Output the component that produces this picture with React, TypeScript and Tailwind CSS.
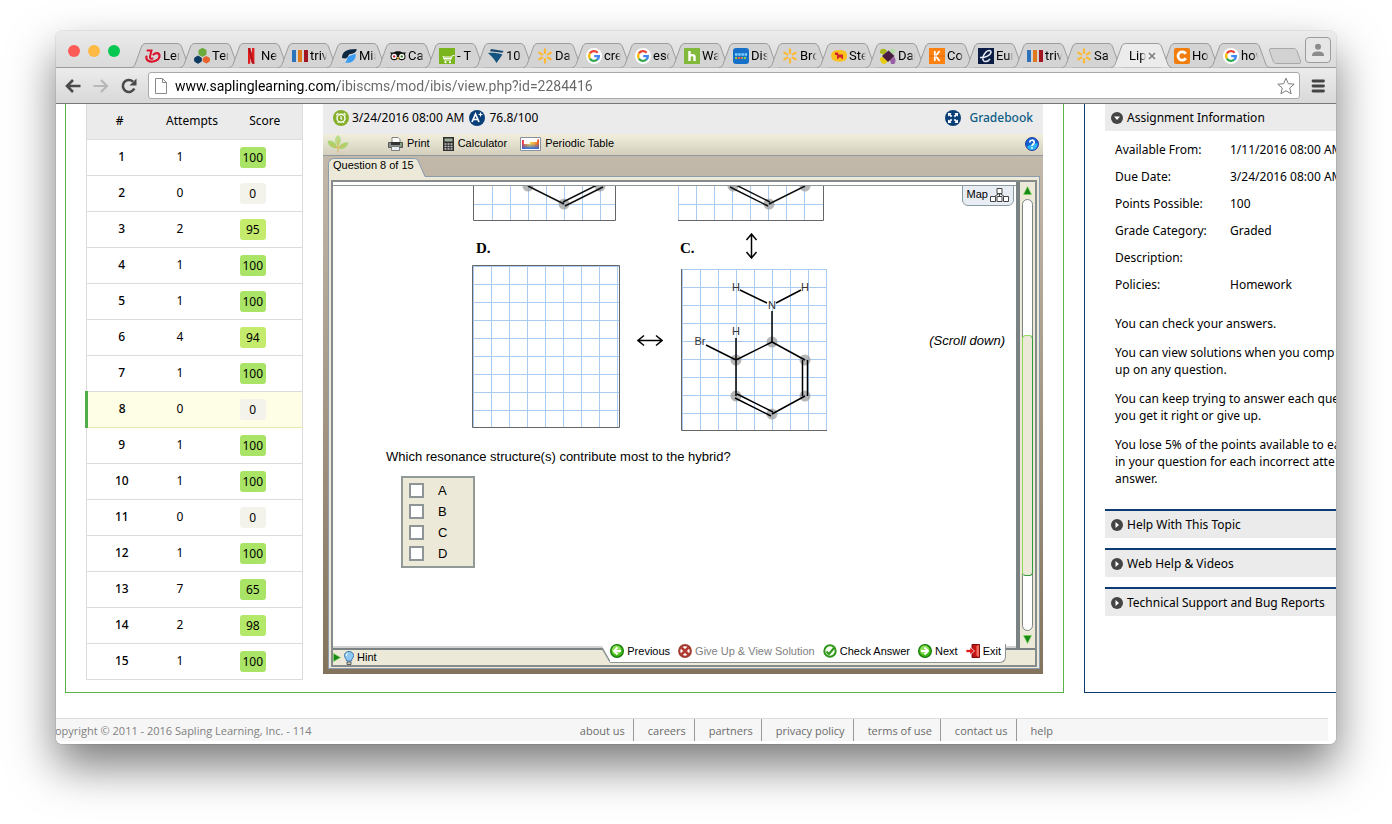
import type { ReactNode } from 'react'

const GoogleIcon = () => (
  <svg viewBox="0 0 16 16" className="h-4 w-4">
    <circle cx="8" cy="8" r="8" fill="#fff" />
    <g fill="none" strokeWidth="2.3">
      <path d="M3.9 5.4A4.9 4.9 0 0 1 11.6 4.7" stroke="#ea4335" />
      <path d="M3.9 10.6A4.9 4.9 0 0 1 3.9 5.4" stroke="#fbbc05" />
      <path d="M11.4 11.5A4.9 4.9 0 0 1 3.9 10.6" stroke="#34a853" />
      <path d="M8.2 8.1H12.9A4.9 4.9 0 0 1 11.2 11.7" stroke="#4285f4" />
    </g>
  </svg>
)

const SparkIcon = () => (
  <svg viewBox="0 0 16 16" className="h-4 w-4" stroke="#fdb933" strokeWidth="2.2" strokeLinecap="round">
    <path d="M8 1.4V5M8 11V14.6M2.3 4.7L5.3 6.4M10.7 9.6L13.7 11.3M2.3 11.3L5.3 9.6M10.7 6.4L13.7 4.7" />
  </svg>
)

const TrivagoIcon = () => (
  <svg viewBox="0 0 16 16" className="h-4 w-4">
    <path d="M0 2H4V14H0Z" fill="#2d73b9" />
    <path d="M6 2H10V14H6Z" fill="#e0791c" />
    <path d="M12 2H16V14H12Z" fill="#a31621" />
  </svg>
)

const icons: Record<string, ReactNode> = {
  lenovo: (
    <svg viewBox="0 0 16 16" className="h-4 w-4" fill="none" stroke="#d9142b" strokeLinecap="round">
      <path d="M2.500 2.500H6.500L5 8.500C4.500 10.500 6 11 7.500 10.500" strokeWidth="2" />
      <path d="M1.500 8.500C.5 12 4 14 8 13.500C12 13 14.800 10.500 14.500 7.500C14 4.500 10.500 4.500 8.500 6.500" strokeWidth="2.200" />
    </svg>
  ),
  terra: (
    <svg viewBox="0 0 16 16" className="h-4 w-4">
      <path d="M8.500 .3L12 2.200V6.400L8.500 8.400L5 6.400V2.200Z" fill="#6aaa3b" stroke="#6aaa3b" strokeLinejoin="round" />
      <path d="M4 8L7.300 9.900V13.300L4 15.300L.7 13.300V9.900Z" fill="#0b3a63" stroke="#0b3a63" strokeLinejoin="round" />
      <path d="M12.300 8.500L15.400 10.200V13.200L12.300 15L9.200 13.200V10.200Z" fill="#e8622b" stroke="#e8622b" strokeLinejoin="round" />
    </svg>
  ),
  netflix: (
    <svg viewBox="0 0 16 16" className="h-4 w-4">
      <path d="M5 0H7.200L9 6V0H11.400V16L9 15.600L7.300 10V15.600L5 16Z" fill="#e01e1e" />
      <path d="M5 0H7.200L11.400 15.800L9 15.600Z" fill="#b5121b" />
    </svg>
  ),
  trivago: <TrivagoIcon />,
  surf: (
    <svg viewBox="0 0 16 16" className="h-4 w-4">
      <path d="M1 10C1 4 5 1 15.500 1C16 3 14 5.500 9.500 6C6.500 6.500 8 9.500 4.500 10.500Z" fill="#0d2843" />
      <path d="M0 15.500C6 15.500 5.500 12 6.500 9.500C8 7 12 7.500 14.500 5.500C15.500 11 12 15.500 4 14.800Z" fill="#3b9cf4" />
    </svg>
  ),
  owl: (
    <svg viewBox="0 0 16 16" className="h-4 w-4">
      <path d="M0 4.500H3.500C6 2.700 10 2.700 12.500 4.500H16L14.500 6.500L9 11H7L1.500 6.500Z" fill="#111" />
      <circle cx="4.200" cy="8.400" r="3.200" fill="#fff" stroke="#111" strokeWidth="1.100" />
      <circle cx="11.800" cy="8.400" r="3.200" fill="#fff" stroke="#111" strokeWidth="1.100" />
      <circle cx="4.200" cy="8.400" r="1.200" fill="#c23" />
      <circle cx="11.800" cy="8.400" r="1.200" fill="#3a7d2c" />
      <path d="M6.800 9L8 12.500L9.200 9Z" fill="#e6a72b" />
    </svg>
  ),
  cart: (
    <svg viewBox="0 0 16 16" className="h-4 w-4">
      <path d="M0 0H16V16H0Z" fill="#7ab51d" />
      <path d="M4 8L5.500 12H11.500L13.500 7.500H15.500M4.500 9H12.500M5 10.500H12" stroke="#fff" fill="none" />
      <circle cx="6.500" cy="14.200" r="1.100" fill="#fff" />
      <circle cx="11" cy="14.200" r="1.100" fill="#fff" />
    </svg>
  ),
  eagle: (
    <svg viewBox="0 0 16 16" className="h-4 w-4">
      <path d="M3 1L15.500 3L14.500 4.800L2 3.300Z" fill="#17466e" />
      <path d="M0 5C5 4.500 10 5 14.500 6.500L8.500 15C7 11.500 3 8 0 5Z" fill="#14527f" />
    </svg>
  ),
  spark: <SparkIcon />,
  google: <GoogleIcon />,
  houzz: (
    <svg viewBox="0 0 16 16" className="h-4 w-4">
      <path d="M0 0H16V16H0Z" fill="#83b93b" />
      <path d="M5.500 3V13M5.500 8.500C6.500 6.800 10.500 6.500 10.500 9V13" stroke="#fff" strokeWidth="2.400" fill="none" />
    </svg>
  ),
  discover: (
    <svg viewBox="0 0 16 16" className="h-4 w-4">
      <rect width="16" height="16" rx="3" fill="#1670c8" />
      <path d="M2 6.500H14" stroke="#7fd0ff" strokeWidth="2.400" strokeDasharray="2.500 .7" />
      <path d="M2 10H14" stroke="#8fd14f" strokeWidth="2" strokeDasharray="2 1" />
      <path d="M4.500 10H9" stroke="#e0553d" strokeWidth="2" strokeDasharray="2 1" />
    </svg>
  ),
  steak: (
    <svg viewBox="0 0 16 16" className="h-4 w-4">
      <path d="M2 3.500C5 1.500 12 1.500 14.500 3.500C16.500 5.500 16.500 10 14.500 12C11 14.500 5 14 2 12C-.5 10 -.5 5.500 2 3.500Z" fill="#fbc21f" />
      <path d="M4 4.500H7L7.500 6.500H12V11H10.500V9.500H7.500V11H6V7H4Z" fill="#d2232a" />
    </svg>
  ),
  darden: (
    <svg viewBox="0 0 16 16" className="h-4 w-4">
      <path d="M0 3C1 0 5 0 7 3L4 7L0 5Z" fill="#a7b71c" />
      <path d="M9 3C11-.5 15 0 15.500 3L14 6.500L11 6Z" fill="#b5dba8" />
      <path d="M0 10L4 8L8 13L5 16C2 16 0 14 0 10Z" fill="#e6cc12" />
      <path d="M10 12L14 9C16 10 16 15 14 16H11Z" fill="#9b5fa8" />
      <path d="M8.500 2.500L14.500 8L8 14L2 8Z" fill="#4b1c42" />
    </svg>
  ),
  kayak: (
    <svg viewBox="0 0 16 16" className="h-4 w-4">
      <path d="M0 0H16V16H0Z" fill="#ff8211" />
      <path d="M5.800 3V13M10.500 3L6.800 8L10.500 13" stroke="#fff" strokeWidth="1.800" fill="none" />
      <path d="M0 8H16" stroke="#c9620a" strokeWidth=".7" />
    </svg>
  ),
  europe: (
    <svg viewBox="0 0 16 16" className="h-4 w-4">
      <path d="M0 0H16V16H0Z" fill="#0b1d44" />
      <path d="M2 9.500C7 10 13 7 13 4C13 1.800 9.500 2 7.500 4.500C4.500 8 3.500 13.500 7.500 13.500C9.500 13.500 11 12.500 12 11" stroke="#e8edf5" strokeWidth="1.500" fill="none" />
    </svg>
  ),
  choice: (
    <svg viewBox="0 0 16 16" className="h-4 w-4">
      <rect width="16" height="16" rx="2" fill="#f07d0c" />
      <path d="M11.800 5.800A4.200 4.200 0 1 0 11.800 10.200" stroke="#fff" strokeWidth="2.800" fill="none" />
    </svg>
  ),
}

const tabs = [
  { icon: 'lenovo', title: 'Len' },
  { icon: 'terra', title: 'Ter' },
  { icon: 'netflix', title: 'Ne' },
  { icon: 'trivago', title: 'triv' },
  { icon: 'surf', title: 'Mia' },
  { icon: 'owl', title: 'Ca' },
  { icon: 'cart', title: '- T' },
  { icon: 'eagle', title: '10' },
  { icon: 'spark', title: 'Da' },
  { icon: 'google', title: 'cre' },
  { icon: 'google', title: 'esc' },
  { icon: 'houzz', title: 'Wa' },
  { icon: 'discover', title: 'Dis' },
  { icon: 'spark', title: 'Bro' },
  { icon: 'steak', title: 'Ste' },
  { icon: 'darden', title: 'Dar' },
  { icon: 'kayak', title: 'Co' },
  { icon: 'europe', title: 'Eur' },
  { icon: 'trivago', title: 'triv' },
  { icon: 'spark', title: 'Sa' },
  { icon: '', title: 'Lip', active: true },
  { icon: 'choice', title: 'Ho' },
  { icon: 'google', title: 'how' },
]

const scores = [
  { attempts: 1, score: 100 },
  { attempts: 0, score: 0 },
  { attempts: 2, score: 95 },
  { attempts: 1, score: 100 },
  { attempts: 1, score: 100 },
  { attempts: 4, score: 94 },
  { attempts: 1, score: 100 },
  { attempts: 0, score: 0 },
  { attempts: 1, score: 100 },
  { attempts: 1, score: 100 },
  { attempts: 0, score: 0 },
  { attempts: 1, score: 100 },
  { attempts: 7, score: 65 },
  { attempts: 2, score: 98 },
  { attempts: 1, score: 100 },
]

const details = [
  ['Available From:', '1/11/2016 08:00 AM'],
  ['Due Date:', '3/24/2016 08:00 AM'],
  ['Points Possible:', '100'],
  ['Grade Category:', 'Graded'],
  ['Description:', ''],
  ['Policies:', 'Homework'],
]

const footerLinks = ['about us', 'careers', 'partners', 'privacy policy', 'terms of use', 'contact us', 'help']

const badgeColor = (score: number) => {
  if (score === 0) return 'bg-[#f3f3ec]'
  if (score === 95 || score === 94) return 'bg-[#c4eb6c]'
  if (score === 98) return 'bg-[#b4e868]'
  return 'bg-[#a9e467]'
}

function TabStrip() {
  return (
    <div className="flex h-[37px] items-end border-b border-[#9b9b9b] bg-linear-to-b from-[#ebebeb] to-[#dadada]">
      <div className="flex gap-2 self-center pt-1 pl-3">
        <span className="h-3 w-3 rounded-full bg-[#fc5b57]" />
        <span className="h-3 w-3 rounded-full bg-[#fdba45]" />
        <span className="h-3 w-3 rounded-full bg-[#05c853]" />
      </div>
      <div className="-mb-px ml-[11px] flex min-w-0">
        {tabs.map((t, i) => (
          <button
            key={i}
            className={
              t.active
                ? 'relative z-10 -mr-3 flex h-[25px] w-[61px] shrink-0 items-center pl-[18px]'
                : 'relative -mr-3 flex h-[25px] w-[61px] shrink-0 items-center pl-[14px]'
            }
          >
            <svg viewBox="0 0 61 25" className="absolute inset-0 h-[25px] w-[61px]">
              <path
                d="M0 24.500C3 24.500 4 22 5 19L10 5C11 2 12 .5 15 .5H46C49 .5 50 2 51 5L56 19C57 22 58 24.500 61 24.500"
                fill={t.active ? '#ececec' : '#d4d4d4'}
                stroke="#9d9d9d"
              />
            </svg>
            {!t.active && <span className="relative mr-[2px] h-4 w-4">{icons[t.icon]}</span>}
            <span className="relative w-[17px] overflow-hidden text-left text-[13px] leading-4 whitespace-nowrap mask-[linear-gradient(to_right,#000_70%,transparent)]">
              {t.title}
            </span>
            {t.active && (
              <svg viewBox="0 0 8 8" className="relative ml-0.5 h-2 w-2" stroke="#7b7b7b" strokeWidth="1.500">
                <path d="M1 1L7 7M7 1L1 7" />
              </svg>
            )}
          </button>
        ))}
      </div>
      <button aria-label="New tab" className="mb-0.5 ml-2.5">
        <svg viewBox="0 0 34 18" className="h-[18px] w-[34px]">
          <path d="M3 1.500H25C27 1.500 28 2 29 4L32.500 14C33 16 32.500 16.500 31 16.500H9C7 16.500 6 16 5 14L1.500 4C1 2 1.500 1.500 3 1.500Z" fill="#d2d2d2" stroke="#a8a8a8" />
        </svg>
      </button>
      <button aria-label="Profile" className="mr-[5px] mb-[4px] ml-auto flex h-[26px] w-[26px] items-center justify-center rounded-sm border border-[#9c9c9c] bg-[#e6e6e6]">
        <svg viewBox="0 0 14 14" className="h-3.5 w-3.5" fill="#8c8c8c">
          <circle cx="7" cy="3.800" r="3" />
          <path d="M1 13C1 9.500 3 8.500 7 8.500S13 9.500 13 13Z" />
        </svg>
      </button>
    </div>
  )
}

function AddressBar() {
  return (
    <div className="flex h-9 items-center border-b border-[#777] bg-linear-to-b from-[#ececec] to-[#d8d8d8] pr-[11px] pl-[9px]">
      <button aria-label="Back" className="mr-3">
        <svg viewBox="0 0 16 14" className="h-3.5 w-4" fill="none" stroke="#4a4a4a" strokeWidth="2.600">
          <path d="M15.500 7H2.500M8 1L2 7L8 13" />
        </svg>
      </button>
      <button aria-label="Forward" className="mr-3">
        <svg viewBox="0 0 16 14" className="h-3.5 w-4" fill="none" stroke="#b7b7b7" strokeWidth="2.200">
          <path d="M.5 7H13.500M8 1L14 7L8 13" />
        </svg>
      </button>
      <button aria-label="Reload" className="mr-[11px]">
        <svg viewBox="0 0 16 16" className="h-4 w-4">
          <path d="M13.300 10.500A6 6 0 1 1 12 3.600" fill="none" stroke="#4a4a4a" strokeWidth="2.600" />
          <path d="M15.500 .5V7.500H8.500Z" fill="#4a4a4a" />
        </svg>
      </button>
      <div className="flex h-[27px] flex-1 items-center rounded-[3px] border border-[#a9a9a9] bg-white pr-1 pl-1.5">
        <svg viewBox="0 0 12 16" className="h-4 w-3" fill="#fff" stroke="#8a8a8a">
          <path d="M.5 .5H7.500L11.500 4.500V15.500H.5ZM7.500 .5V4.500H11.500" />
        </svg>
        <input
          aria-label="Address"
          defaultValue="www.saplinglearning.com/ibiscms/mod/ibis/view.php?id=2284416"
          className="ml-2 min-w-0 flex-1 bg-[linear-gradient(90deg,#000_163px,#666_163px)] bg-clip-text text-sm text-transparent outline-none"
        />
        <button aria-label="Bookmark">
          <svg viewBox="0 0 18 18" className="h-[18px] w-[18px]" fill="#fff" stroke="#7d7d7d" strokeLinejoin="round">
            <path d="M9 1.200L11.300 6.700L17.200 7.200L12.700 11L14.100 16.800L9 13.700L3.900 16.800L5.300 11L.8 7.200L6.700 6.700Z" />
          </svg>
        </button>
      </div>
      <button aria-label="Menu" className="ml-[11px]">
        <svg viewBox="0 0 14 14" className="h-3.5 w-3.5" stroke="#444" strokeWidth="2.800" strokeLinecap="round">
          <path d="M2 2H12.500M2 7H12.500M2 12H12.500" />
        </svg>
      </button>
    </div>
  )
}

function ScoreTable() {
  return (
    <table className="w-[218px] shrink-0 table-fixed border-collapse self-start border border-t-0 border-[#dcdcdc] text-center text-xs text-black">
      <thead>
        <tr className="h-[35px] bg-[#ebebeb]">
          <th className="w-[70px] border-b border-[#dcdcdc] pr-1 font-medium">#</th>
          <th className="w-[71px] border-b border-[#dcdcdc] font-normal">Attempts</th>
          <th className="border-b border-[#dcdcdc] font-normal">Score</th>
        </tr>
      </thead>
      <tbody>
        {scores.map((s, i) => (
          <tr key={i} className={i === 7 ? 'h-9 border-y border-[#e8e6b0] bg-[#fefde6]' : 'h-9 border-b border-[#dcdcdc]'}>
            <td className={i === 7 ? 'border-l-3 border-l-[#4fae4a] font-medium' : 'font-medium'}>{i + 1}</td>
            <td className="pr-6">{s.attempts}</td>
            <td className="pr-6">
              <span className={`inline-block w-[26px] rounded-[3px] leading-[21px] ${badgeColor(s.score)}`}>{s.score}</span>
            </td>
          </tr>
        ))}
      </tbody>
    </table>
  )
}

const range = (n: number) => Array.from({ length: n }, (_, i) => i)

// 18px squares, first line of each direction at x0 / y0
function GridLines({ w, h, x0, y0, cols, rows }: { w: number; h: number; x0: number; y0: number; cols: number; rows: number }) {
  return (
    <g stroke="#a9cbf0">
      {range(cols).map((i) => (
        <path key={i} d={`M${x0 + i * 18} 0V${h}`} />
      ))}
      {range(rows).map((i) => (
        <path key={i} d={`M0 ${y0 + i * 18}H${w}`} />
      ))}
    </g>
  )
}

function Atoms({ points }: { points: number[][] }) {
  return (
    <g fill="#999" fillOpacity="0.7">
      {points.map(([x, y]) => (
        <circle key={`${x},${y}`} cx={x} cy={y} r="5.500" />
      ))}
    </g>
  )
}

function Structures() {
  return (
    <>
      <div className="flex gap-[62px] pl-[140px]">
        <svg viewBox="0 0 143 35" className="h-[35px] w-[143px]">
          <GridLines w={143} h={35} x0={19.5} y0={18.5} cols={7} rows={1} />
          <path d="M.5 0V34.500H142.500V0" fill="none" stroke="#666" />
          <Atoms points={[[55, 0], [91, 18], [127, 0]]} />
          <path d="M55 0L91 18M90 16L124 -1M92 20L130 1" stroke="#111" strokeWidth="1.500" />
        </svg>
        <svg viewBox="0 0 146 35" className="h-[35px] w-[146px]">
          <GridLines w={146} h={35} x0={0.5} y0={18.5} cols={8} rows={1} />
          <path d="M0 34.500H145.500V0" fill="none" stroke="#666" />
          <Atoms points={[[55, 0], [91, 18], [127, 0]]} />
          <path d="M127 0L91 18M92 16L58 -1M90 20L52 1" stroke="#111" strokeWidth="1.500" />
        </svg>
      </div>

      <div className="flex h-11 items-center pt-2.5 pl-[143px] font-['Liberation_Serif',serif] text-[15px] font-bold">
        <span className="w-[204px]">D.</span>
        <span className="w-[65px]">C.</span>
        <svg viewBox="0 0 13 26" className="mb-1 h-[26px] w-[13px]" fill="none" stroke="#000" strokeWidth="1.500">
          <path d="M6.500 1V25M1.500 7L6.500 1L11.500 7M1.500 19L6.500 25L11.500 19" />
        </svg>
      </div>

      <div className="flex items-start pl-[139px]">
        <svg viewBox="0 0 148 163" className="h-[163px] w-[148px]">
          <GridLines w={148} h={163} x0={1.5} y0={1.5} cols={9} rows={9} />
          <path d="M.5 .5H147.500V162.500H.5Z" fill="none" stroke="#666" />
        </svg>
        <svg viewBox="0 0 26 13" className="mr-[18px] mb-4 ml-[17px] h-[13px] w-[26px] self-center" fill="none" stroke="#000" strokeWidth="1.500">
          <path d="M1 6.500H25M7 1.500L1 6.500L7 11.500M19 1.500L25 6.500L19 11.500" />
        </svg>
        <svg viewBox="0 0 146 162" className="mt-1 h-[162px] w-[146px]">
          <GridLines w={146} h={162} x0={1.5} y0={0.5} cols={9} rows={9} />
          <path d="M.5 0V161.500H146" fill="none" stroke="#666" />
          <Atoms points={[[91, 73], [55, 91], [55, 127], [91, 145], [124, 127], [124, 91]]} />
          <g stroke="#000" strokeWidth="1.500">
            <path d="M59 21L86 34M120 21L95 34M91 42V73M91 73L55 91M91 73L124 91M55 69V91M25 76L55 91M55 91V127" />
            <path d="M121.500 91V127M126.500 91V127M124 127L91 145M56 125L92 143M54 129L90 147" />
          </g>
          <g fill="#333" fontSize="11" textAnchor="middle" fontFamily="Liberation Sans, sans-serif">
            <text x="55" y="22">H</text>
            <text x="124" y="22">H</text>
            <text x="91" y="40">N</text>
            <text x="55" y="66">H</text>
            <text x="19" y="76">Br</text>
          </g>
        </svg>
        <p className="mb-3.5 ml-auto self-center pr-[11px] text-[13px] italic">(Scroll down)</p>
      </div>
    </>
  )
}

const sphere = 'h-[14px] w-[14px]'

function PlayerNav() {
  return (
    <div className="relative -mt-1 mr-[29px] ml-auto flex h-[17px]">
      <svg viewBox="0 0 12 17" className="h-[17px] w-3">
        <path d="M0 0H12V16.500H10C8 16.500 7.500 15 6.500 13Z" fill="#fff" />
        <path d="M0 2L6.500 13C7.500 15 8 16.500 10 16.500H12" fill="none" stroke="#8c9496" strokeWidth="1.500" />
      </svg>
      <div className="-mt-0.5 -ml-1 flex items-center gap-2 rounded-br-md border-r border-b border-[#8c9496] bg-white pr-1 pb-1 text-[11px] leading-4 text-black">
        <button className="flex items-center gap-[3px]">
          <svg viewBox="0 0 14 14" className={sphere}>
            <circle cx="7" cy="7" r="6.400" fill="#3fb618" stroke="#177a0b" strokeWidth="1.200" />
            <circle cx="6.500" cy="6" r="4.500" fill="#8fe05c" />
            <path d="M11 7H4.500M7.500 3.500L4 7L7.500 10.500" stroke="#fff" strokeWidth="1.800" fill="none" />
          </svg>
          Previous
        </button>
        <button className="flex items-center gap-[3px] text-[#808080]">
          <svg viewBox="0 0 14 14" className={sphere}>
            <circle cx="7" cy="7" r="5.800" fill="#fff" stroke="#a33a30" strokeWidth="2.200" />
            <path d="M3.500 3.500L10.500 10.500M10.500 3.500L3.500 10.500" stroke="#b23b32" strokeWidth="2.600" />
          </svg>
          Give Up &amp; View Solution
        </button>
        <button className="flex items-center gap-[3px]">
          <svg viewBox="0 0 14 14" className={sphere}>
            <circle cx="7" cy="7" r="5.700" fill="#f4fff0" stroke="#2f9619" strokeWidth="2" />
            <path d="M3.500 7.500L6 10L11 4" stroke="#2f9619" strokeWidth="2" fill="none" />
          </svg>
          Check Answer
        </button>
        <button className="flex items-center gap-[3px]">
          <svg viewBox="0 0 14 14" className={sphere}>
            <circle cx="7" cy="7" r="6.400" fill="#3fb618" stroke="#177a0b" strokeWidth="1.200" />
            <circle cx="6.500" cy="6" r="4.500" fill="#8fe05c" />
            <path d="M3 7H9.500M6.500 3.500L10 7L6.500 10.500" stroke="#fff" strokeWidth="1.800" fill="none" />
          </svg>
          Next
        </button>
        <button className="flex items-center gap-[3px]">
          <svg viewBox="0 0 14 14" className={sphere}>
            <path d="M6 .5H13.500V13.500H6Z" fill="#c41414" stroke="#7c0b0b" />
            <path d="M10.500 2L13 .8V13L10.500 11.500Z" fill="#f46c5c" />
            <path d="M0 5.500H4V3L8.500 7L4 11V8.500H0Z" fill="#e21a1a" stroke="#fff" strokeWidth=".7" />
          </svg>
          Exit
        </button>
      </div>
    </div>
  )
}

function Player() {
  return (
    <section className="flex min-w-0 flex-1 flex-col self-start">
      <div className="flex h-[30px] items-center bg-[#ebebeb] px-2.5 pb-0.5 text-xs text-black">
        <svg viewBox="0 0 16 16" className="h-4 w-4">
          <circle cx="8" cy="8" r="8" fill="#86b02b" />
          <circle cx="8" cy="8.300" r="4" fill="none" stroke="#fff" strokeWidth="1.400" />
          <path d="M8 6V8.500L9 9.500M3.200 5.200L5.200 3.200M12.800 5.200L10.800 3.200M5 12.800L5.800 11.500M11 12.800L10.200 11.500" stroke="#fff" strokeWidth="1.200" fill="none" />
        </svg>
        <span className="ml-[3px]">3/24/2016 08:00 AM</span>
        <svg viewBox="0 0 16 16" className="ml-[5px] h-4 w-4">
          <circle cx="8" cy="8" r="8" fill="#0b3f78" />
          <path d="M3 12L6.500 4L10 12M4.300 9.500H8.700" stroke="#fff" strokeWidth="1.700" fill="none" />
          <path d="M11.500 2.500V6.500M9.500 4.500H13.500" stroke="#fff" strokeWidth="1.200" />
        </svg>
        <span className="ml-1">76.8/100</span>
        <a href="#gradebook" className="ml-auto flex items-center gap-2 font-medium text-[#0b5c85]">
          <svg viewBox="0 0 16 16" className="h-4 w-4">
            <circle cx="8" cy="8" r="8" fill="#0b3f78" />
            <path d="M3 3H6.500L5.500 4.200L7.300 6L6 7.300L4.200 5.500L3 6.500ZM13 3V6.500L11.800 5.500L10 7.300L8.700 6L10.500 4.200L9.500 3ZM3 13V9.500L4.200 10.500L6 8.700L7.300 10L5.500 11.800L6.500 13ZM13 13H9.500L10.500 11.800L8.700 10L10 8.700L11.800 10.500L13 9.500Z" fill="#fff" />
          </svg>
          Gradebook
        </a>
      </div>

      <div className="flex h-[22px] items-center border-b border-[#8e9a9c] bg-linear-to-b from-[#f1eedd] to-[#d4cfbc] pr-1 pb-0.5 pl-1 font-['Liberation_Sans',sans-serif] text-[11px] text-black">
        <svg viewBox="0 0 22 18" className="h-[18px] w-[22px]">
          <path d="M11 0C15 3 15 8 11 11C7 8 7 3 11 0Z" fill="#b9dd8a" />
          <path d="M.5 6C5 5 9 7 10.500 13C5 14 1.500 11 .5 6Z" fill="#a9d46e" />
          <path d="M21.500 7.500C17 7 13 8.500 11.500 13.500C16 15 20 12.500 21.500 7.500Z" fill="#a9d46e" />
          <path d="M11 5V17.500M4 9L10.500 13L17.500 10" stroke="#d9b75a" fill="none" />
        </svg>
        <button className="ml-[39px] flex items-center gap-1">
          <svg viewBox="0 0 15 14" className="h-3.5 w-[15px]">
            <path d="M4 .5H10L12 2.500V6H4Z" fill="#fff" stroke="#666" strokeWidth=".8" />
            <path d="M.5 5.500H14.500V10.500H.5Z" fill="#8d9191" stroke="#555" />
            <path d="M3 5H12V8H3Z" fill="#333" />
            <path d="M3.500 9.500H11.500V13.500H3.500Z" fill="#e9eef4" stroke="#666" strokeWidth=".8" />
            <path d="M12 7H13.500" stroke="#5ad04c" />
          </svg>
          Print
        </button>
        <button className="ml-[13px] flex items-center gap-1">
          <svg viewBox="0 0 11 14" className="h-3.5 w-[11px]">
            <path d="M0 0H11V14H0Z" fill="#2e2e2e" />
            <path d="M1.500 1.500H9.500V4.500H1.500Z" fill="#9fb09b" />
            <path d="M1.500 7H9.500M1.500 9.500H9.500M1.500 12H9.500" stroke="#c8c8c8" strokeWidth="1.300" strokeDasharray="2 1" />
          </svg>
          Calculator
        </button>
        <button className="ml-[13px] flex items-center gap-1">
          <svg viewBox="0 0 21 14" className="h-3.5 w-[21px]">
            <defs>
              <linearGradient id="elements" x1="0" y1="0" x2="1" y2="0">
                <stop offset="0" stopColor="#e8285a" />
                <stop offset=".2" stopColor="#f58a3a" />
                <stop offset=".45" stopColor="#fbd84a" />
                <stop offset=".75" stopColor="#f0a03c" />
                <stop offset="1" stopColor="#e8502c" />
              </linearGradient>
              <linearGradient id="elementsShade" x1="0" y1="0" x2="0" y2="1">
                <stop offset=".45" stopColor="#36c" stopOpacity="0" />
                <stop offset="1" stopColor="#2a6be0" />
              </linearGradient>
            </defs>
            <path d="M.5 .5H20.500V13.500H.5Z" fill="#fff" stroke="#8b90a0" />
            <path d="M2 3H4V7H10V5H17V3L19 2V12H2Z" fill="url(#elements)" />
            <path d="M2 3H4V7H10V5H17V3L19 2V12H2Z" fill="url(#elementsShade)" />
          </svg>
          Periodic Table
        </button>
        <button aria-label="Help" className="ml-auto">
          <svg viewBox="0 0 14 14" className="h-3.5 w-3.5">
            <circle cx="7" cy="7" r="6.500" fill="#1560d0" stroke="#2a3f9a" />
            <path d="M2 10C4 7 9 8 12.500 6C13 10 10 13 7 13C5 13 3 12 2 10Z" fill="#2cb5f2" />
            <path d="M4.800 5.500C4.800 2.500 9.300 2.500 9.300 5.300C9.300 7 7 7 7 9M7 10.200V11.700" stroke="#fff" strokeWidth="1.700" fill="none" />
          </svg>
        </button>
      </div>

      <div className="bg-linear-to-b from-[#c3b9aa] to-[#84735c] pt-0.5 pr-[3px] pb-[5px] pl-[5px] font-['Liberation_Sans',sans-serif] text-black">
        <div className="relative -mb-px flex h-[19px]">
          <div className="rounded-tl-md border-t border-l border-[#8b9caf] bg-[#ece9d8] pl-1 text-[11px] leading-3">Question 8 of 15</div>
          <svg viewBox="0 0 12 19" className="h-[19px] w-3">
            <path d="M0 0C3 0 4 2 5 5L11 19H0Z" fill="#ece9d8" />
            <path d="M0 .5C3 .5 4 2 5 5L11 18.500H12" fill="none" stroke="#8b9caf" />
          </svg>
        </div>

        <div className="border border-[#8b9caf] bg-[#ece9d8] px-0.5 pt-[3px] pb-px">
          <div className="border-2 border-[#868c8b]">
            <div className="flex">
              <div className="relative min-w-0 flex-1 border-b-2 border-[#d2d2d2] bg-white pt-[3px]">
                <div className="border-t border-[#8f9696] pb-[78px]">
                  <Structures />
                  <p className="mt-[18px] pl-[53px] text-[13px] leading-4">Which resonance structure(s) contribute most to the hybrid?</p>
                  <div className="mt-[11px] ml-[68px] w-[74px] border-2 border-[#929a98] bg-[#ece9d8] py-0.5 pl-1.5">
                    {['A', 'B', 'C', 'D'].map((o) => (
                      <label key={o} className="flex h-[21px] items-center gap-3.5 text-[13px]">
                        <input type="checkbox" className="h-[15px] w-[15px] appearance-none border-2 border-[#8d9596] bg-white" />
                        {o}
                      </label>
                    ))}
                  </div>
                </div>
                <button className="absolute top-[3px] right-[2px] flex h-[21px] items-center gap-0.5 rounded-b-md border border-[#8a9aa5] bg-[#e8edf3] px-1 pb-0.5 text-[11px]">
                  Map
                  <svg viewBox="0 0 19 14" className="h-3.5 w-[19px]" fill="#fff" stroke="#444">
                    <path d="M9.500 5L4 9M9.500 5L15 9M9.500 5V9" />
                    <path d="M7 .5H12V5.500H7ZM.5 8.500H5.500V13.500H.5ZM7 8.500H12V13.500H7ZM13.500 8.500H18.500V13.500H13.500Z" />
                  </svg>
                </button>
              </div>

              <div className="flex w-[19px] flex-col items-center border-l-4 border-[#7b8283] px-0.5 pt-1 pb-1">
                <button aria-label="Scroll up">
                  <svg viewBox="0 0 9 9" className="h-[9px] w-[9px]">
                    <path d="M4.500 .5L8.500 8.500H.5Z" fill="#178a17" stroke="#7fd65a" strokeWidth=".6" />
                  </svg>
                </button>
                <div className="mt-1 flex w-[11px] flex-1 flex-col rounded-md border border-[#7b8283] bg-white pt-[135px]">
                  <div className="-mx-px h-[241px] rounded border border-[#8fdc5a] border-r-[#2f9a3a] border-b-[#2f9a3a] bg-[#ece9d8]" />
                </div>
                <button aria-label="Scroll down" className="mt-1">
                  <svg viewBox="0 0 9 9" className="h-[9px] w-[9px]">
                    <path d="M4.500 8.500L8.500 .5H.5Z" fill="#178a17" stroke="#7fd65a" strokeWidth=".6" />
                  </svg>
                </button>
              </div>
            </div>

            <div className="flex h-[17px] border-t-2 border-[#7b8283]">
              <button className="flex items-center text-[11px] leading-[15px]">
                <svg viewBox="0 0 8 9" className="h-[9px] w-2">
                  <path d="M.5 .5L7.500 4.500L.5 8.500Z" fill="#178a17" stroke="#7fd65a" strokeWidth=".6" />
                </svg>
                <svg viewBox="0 0 10 14" className="mx-[3px] h-3.5 w-2.5">
                  <path d="M5 .5C8 .5 9.500 2.500 9.500 4.500C9.500 7 7.500 7.500 7.500 10H2.500C2.500 7.500 .5 7 .5 4.500C.5 2.500 2 .5 5 .5Z" fill="#8fc8f2" stroke="#3d77ad" />
                  <path d="M4 2C2.500 2.500 2.300 3.500 2.500 5" stroke="#fff" fill="none" />
                  <path d="M3 11H7V13.500H3Z" fill="#ccc" stroke="#444" strokeWidth=".8" />
                </svg>
                Hint
              </button>
              <PlayerNav />
            </div>
          </div>
        </div>
      </div>
    </section>
  )
}

function Bullet({ open }: { open?: boolean }) {
  return (
    <svg viewBox="0 0 12 12" className="h-3 w-3">
      <circle cx="6" cy="6" r="6" fill="#444" />
      <path d={open ? 'M3 4.500H9L6 8Z' : 'M4.500 3V9L8 6Z'} fill="#fff" />
    </svg>
  )
}

function Sidebar() {
  return (
    <aside className="w-[252px] shrink-0 overflow-hidden border-b border-l border-[#0b3c74] pl-5 text-xs text-black">
      <div className="w-[250px]">
        <h2 className="flex h-[27px] items-center gap-1 bg-[#ebebeb] pl-1.5 font-normal">
          <Bullet open />
          Assignment Information
        </h2>
        <dl className="mt-[5px] ml-2.5 grid grid-cols-[115px_1fr] leading-[27px] whitespace-nowrap">
          {details.map(([k, v]) => (
            <div key={k} className="contents">
              <dt>{k}</dt>
              <dd>{v}</dd>
            </div>
          ))}
        </dl>
        <div className="mt-[17px] ml-2.5 space-y-3 leading-[17px] whitespace-nowrap">
          <p>You can check your answers.</p>
          <p>
            You can view solutions when you comp
            <br />
            up on any question.
          </p>
          <p>
            You can keep trying to answer each que
            <br />
            you get it right or give up.
          </p>
          <p>
            You lose 5% of the points available to ea
            <br />
            in your question for each incorrect atte
            <br />
            answer.
          </p>
        </div>
        <div className="mt-[22px] space-y-2.5">
          {['Help With This Topic', 'Web Help & Videos', 'Technical Support and Bug Reports'].map((t) => (
            <h2 key={t} className="flex h-[29px] items-center gap-1 border-t-2 border-[#0b3c74] bg-[#ebebeb] pl-1.5 font-normal whitespace-nowrap">
              <Bullet />
              {t}
            </h2>
          ))}
        </div>
      </div>
    </aside>
  )
}

export default function App() {
  return (
    <div className="min-h-screen overflow-hidden bg-white px-14 pt-[31px] pb-20">
      <div className="rounded-md shadow-[0_0_1px_rgba(0,0,0,0.6),0_22px_46px_rgba(0,0,0,0.52)]">
        <div className="overflow-hidden rounded-md bg-white font-['Roboto',sans-serif]">
          <TabStrip />
          <AddressBar />

          <main className="flex gap-5 pl-[9px] font-['Noto_Sans',sans-serif]">
            <div className="flex min-w-0 flex-1 gap-5 border-x border-b border-[#58b348] pr-5 pb-3 pl-[19px]">
              <ScoreTable />
              <Player />
            </div>
            <Sidebar />
          </main>

          <footer className="mt-[25px] mr-2 mb-[3px] flex border-t border-[#ddd] bg-[#f6f6f6] font-['Open_Sans',sans-serif] text-[11px] text-[#6b6b6b]">
            <p className="-ml-2 pt-1 leading-4 text-[#808080]">Copyright © 2011 - 2016 Sapling Learning, Inc. - 114</p>
            <nav className="mr-[267px] ml-auto flex">
              {footerLinks.map((l) => (
                <a key={l} href="#" className="border-l border-[#999] pt-1 pr-2 pb-0.5 pl-3.5 leading-4 first:border-l-0">
                  {l}
                </a>
              ))}
            </nav>
          </footer>
        </div>
      </div>
    </div>
  )
}
